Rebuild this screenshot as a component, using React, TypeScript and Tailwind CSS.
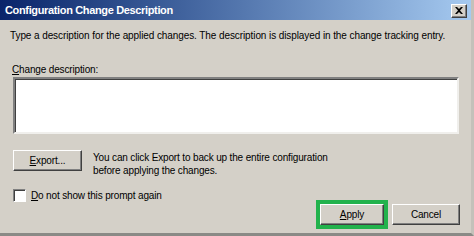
import { useState } from 'react';

const font = { fontFamily: '"Liberation Sans", Arial, sans-serif' };

function Win98Button({
  children,
  className = '',
}: {
  children: React.ReactNode;
  className?: string;
}) {
  return (
    <button
      className={`bg-[#d4d0c8] text-[10px] tracking-[-0.15px] text-black border border-t-white border-l-white border-r-[#404040] border-b-[#404040] shadow-[inset_-1px_-1px_0_#808080] flex items-center justify-center ${className}`}
    >
      {children}
    </button>
  );
}

export default function App() {
  const [desc, setDesc] = useState('');
  const [dontShow, setDontShow] = useState(false);

  return (
    <div
      className="w-[474px] h-[236px] bg-[#d4d0c8] flex flex-col overflow-hidden border-b-[3px] border-b-[#8a8a86] border-r-[3px] border-r-[#c4c1ba]"
      style={font}
    >
      {/* Title bar */}
      <div className="h-[20px] shrink-0 flex items-center justify-between pl-[5px] pr-[4px] bg-gradient-to-r from-[#0a246a] to-[#a6caf0]">
        <span className="text-white font-bold text-[11px] tracking-[-0.35px]">Configuration Change Description</span>
        <Win98Button className="w-[16px] h-[14px] mt-[1px]">
          <svg width="8" height="7" viewBox="0 0 8 7">
            <path d="M0 0h2l2 2 2-2h2L5 3.5 8 7H6L4 5 2 7H0l3-3.5z" fill="black" />
          </svg>
        </Win98Button>
      </div>

      {/* Body */}
      <div className="flex-1 flex flex-col text-[10px] tracking-[-0.15px] text-black pl-[10px] pr-[12px]">
        <p className="mt-[9px] leading-[13px] whitespace-nowrap tracking-[-0.09px]">
          Type a description for the applied changes. The description is displayed in the change tracking entry.
        </p>

        <label className="mt-[21px] ml-[2px] leading-[13px]">
          <span className="underline">C</span>hange description:
        </label>
        <textarea
          value={desc}
          onChange={(e) => setDesc(e.target.value)}
          className="mt-[1px] ml-[3px] w-[446px] h-[57px] shrink-0 bg-white resize-none outline-none border-2 border-t-[#808080] border-l-[#808080] border-r-[#f0efec] border-b-[#f0efec] shadow-[inset_1px_1px_0_#404040]"
        />

        <div className="mt-[16px] ml-[3px] flex items-start gap-[11px]">
          <Win98Button className="w-[69px] h-[21px] shrink-0">
            <span>
              <span className="underline">E</span>xport...
            </span>
          </Win98Button>
          <p className="leading-[13px] mt-[1px]">
            You can click Export to back up the entire configuration
            <br />
            before applying the changes.
          </p>
        </div>

        <label className="mt-[12px] ml-[3px] flex items-center gap-[5px] leading-[13px]">
          <span
            onClick={() => setDontShow(!dontShow)}
            className="w-[13px] h-[13px] bg-white border border-t-[#808080] border-l-[#808080] border-r-white border-b-white shadow-[inset_1px_1px_0_#404040] flex items-center justify-center"
          >
            {dontShow && (
              <svg width="7" height="7" viewBox="0 0 7 7">
                <path d="M0 3l2 2 5-5v2L2 7 0 5z" fill="black" />
              </svg>
            )}
          </span>
          <span>
            <span className="underline">D</span>o not show this prompt again
          </span>
        </label>

        <div className="mt-[-2px] flex justify-end items-center gap-[4px] mr-[-1px]">
          <div className="border-[4px] border-[#22b24c]">
            <Win98Button className="w-[64px] h-[21px]">
              <span>
                <span className="underline">A</span>pply
              </span>
            </Win98Button>
          </div>
          <Win98Button className="w-[68px] h-[21px]">Cancel</Win98Button>
        </div>
      </div>
    </div>
  );
}
